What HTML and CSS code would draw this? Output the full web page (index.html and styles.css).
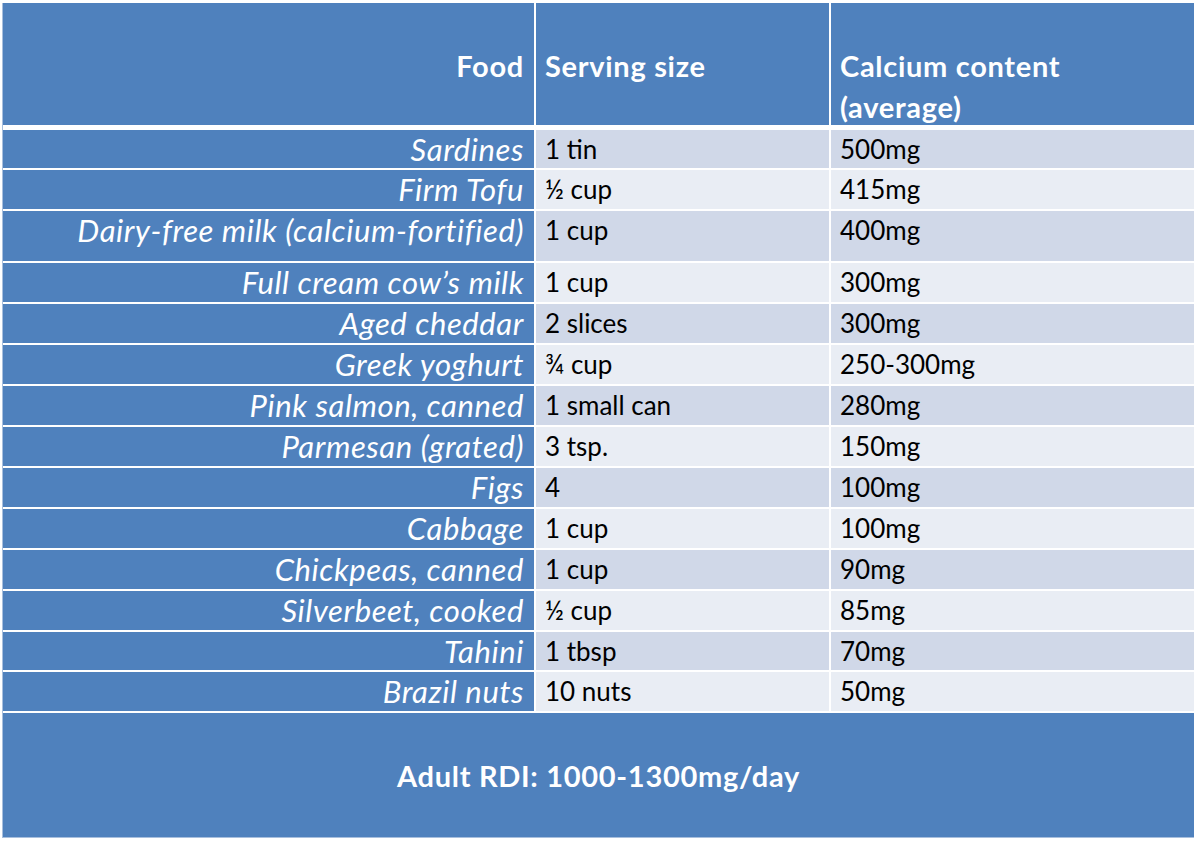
FILE: index.html
```html
<!DOCTYPE html>
<html lang="en">
<head>
<meta charset="utf-8">
<title>Calcium content of foods</title>
<link rel="stylesheet" href="styles.css">
</head>
<body>
<div class="table">
  <div class="row head">
    <div class="cell hfood">Food</div>
    <div class="cell">Serving size</div>
    <div class="cell">Calcium content<br>(average)</div>
  </div>
  <div class="row dark short"><div class="cell food">Sardines</div><div class="cell">1 tin</div><div class="cell">500mg</div></div>
  <div class="row light"><div class="cell food">Firm Tofu</div><div class="cell">½ cup</div><div class="cell">415mg</div></div>
  <div class="row dark tall"><div class="cell food">Dairy-free milk (calcium-fortified)</div><div class="cell">1 cup</div><div class="cell">400mg</div></div>
  <div class="row light"><div class="cell food">Full cream cow’s milk</div><div class="cell">1 cup</div><div class="cell">300mg</div></div>
  <div class="row dark"><div class="cell food">Aged cheddar</div><div class="cell">2 slices</div><div class="cell">300mg</div></div>
  <div class="row light"><div class="cell food">Greek yoghurt</div><div class="cell">¾ cup</div><div class="cell">250-300mg</div></div>
  <div class="row dark"><div class="cell food">Pink salmon, canned</div><div class="cell">1 small can</div><div class="cell">280mg</div></div>
  <div class="row light"><div class="cell food">Parmesan (grated)</div><div class="cell">3 tsp.</div><div class="cell">150mg</div></div>
  <div class="row dark"><div class="cell food">Figs</div><div class="cell">4</div><div class="cell">100mg</div></div>
  <div class="row light"><div class="cell food">Cabbage</div><div class="cell">1 cup</div><div class="cell">100mg</div></div>
  <div class="row dark"><div class="cell food">Chickpeas, canned</div><div class="cell">1 cup</div><div class="cell">90mg</div></div>
  <div class="row light"><div class="cell food">Silverbeet, cooked</div><div class="cell">½ cup</div><div class="cell">85mg</div></div>
  <div class="row dark short"><div class="cell food">Tahini</div><div class="cell">1 tbsp</div><div class="cell">70mg</div></div>
  <div class="row light"><div class="cell food">Brazil nuts</div><div class="cell">10 nuts</div><div class="cell">50mg</div></div>
  <div class="foot">Adult RDI: 1000-1300mg/day</div>
</div>
</body>
</html>
```

FILE: styles.css
```css
html, body {
  margin: 0;
  padding: 0;
  background: #ffffff;
}
body {
  padding-top: 3px;
  padding-left: 2px;
  font-family: Lato, "Open Sans", sans-serif;
}
.table {
  display: flex;
  flex-direction: column;
  gap: 2px;
  border-left: 1px solid #a8bfdd;
  border-bottom: 1px solid #a8bfdd;
}
.row {
  display: grid;
  grid-template-columns: 531px 293px 1fr;
  column-gap: 2px;
  height: 39px;
}
.row.short { height: 38px; }
.row.tall { height: 50px; }
.cell {
  padding: 0 8px 0 9px;
  font-size: 26px;
  line-height: 38px;
  color: #000000;
  white-space: nowrap;
  overflow: hidden;
}
.cell.food {
  background: #4f81bd;
  color: #ffffff;
  font-style: italic;
  font-size: 31px;
  letter-spacing: 0.6px;
  line-height: 38px;
  text-align: right;
  padding-right: 10px;
}
.dark .cell { background: #d0d8e8; }
.light .cell { background: #e9edf4; }
.dark .cell.food, .light .cell.food { background: #4f81bd; }
.row.head {
  height: 122px;
  margin-bottom: 3px;
}
.head .cell {
  background: #4f81bd;
  color: #ffffff;
  font-weight: 700;
  font-size: 29px;
  letter-spacing: 0.7px;
  line-height: 41px;
  padding-top: 42px;
}
.head .cell.hfood {
  text-align: right;
  padding-right: 10px;
}
.foot {
  height: 124px;
  background: #4f81bd;
  color: #ffffff;
  font-weight: 700;
  font-size: 29px;
  letter-spacing: 0.7px;
  display: flex;
  align-items: center;
  justify-content: center;
}
```
